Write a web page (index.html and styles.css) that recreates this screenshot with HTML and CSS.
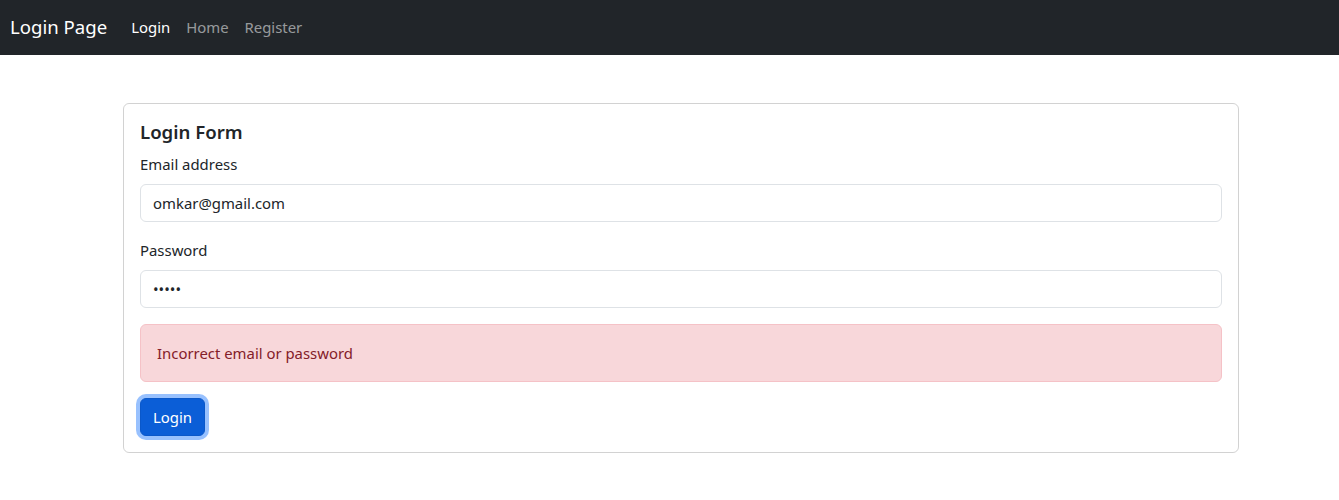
FILE: index.html
```html
<!DOCTYPE html>
<html lang="en">
<head>
<meta charset="utf-8">
<title>Login Page</title>
<link rel="stylesheet" href="styles.css">
</head>
<body>
<nav class="navbar">
  <a class="brand" href="#">Login Page</a>
  <ul class="nav">
    <li><a class="nav-link active" href="#">Login</a></li>
    <li><a class="nav-link" href="#">Home</a></li>
    <li><a class="nav-link" href="#">Register</a></li>
  </ul>
</nav>
<main class="container">
  <div class="card">
    <h5 class="card-title">Login Form</h5>
    <form class="form">
      <div class="field">
        <label class="label" for="email">Email address</label>
        <input class="input" id="email" type="email" value="omkar@gmail.com">
      </div>
      <div class="field">
        <label class="label" for="password">Password</label>
        <input class="input" id="password" type="password" value="12345">
      </div>
      <div class="alert">Incorrect email or password</div>
      <div><button class="btn" type="button">Login</button></div>
    </form>
  </div>
</main>
</body>
</html>
```
FILE: styles.css
```css
* { box-sizing: border-box; }
html, body { margin: 0; padding: 0; }
body {
  font-family: "Noto Sans", "Open Sans", sans-serif;
  font-size: 14.9px;
  line-height: 24px;
  color: #212529;
  background: #fff;
}
.navbar {
  background: #212529;
  height: 55px;
  display: flex;
  align-items: center;
  padding: 0 12px 2px 10px;
}
.brand {
  color: #fff;
  text-decoration: none;
  font-size: 18.6px;
  line-height: 30px;
  margin-right: 16px;
}
.nav {
  list-style: none;
  display: flex;
  margin: 0;
  padding: 0;
}
.nav-link {
  display: block;
  padding: 8px;
  color: rgba(255,255,255,.55);
  text-decoration: none;
}
.nav-link.active { color: #fff; }
.container {
  width: 1116px;
  margin: 48px 0 0 calc(50% - 546.5px);
}
.card {
  border: 1px solid rgba(0,0,0,.175);
  border-radius: 6px;
  padding: 16px;
}
.card-title {
  margin: 0 0 8px;
  font-size: 18.6px;
  font-weight: 600;
  line-height: 24px;
}
.form {
  display: flex;
  flex-direction: column;
  gap: 16px;
}
.field { display: flex; flex-direction: column; }
.label { margin-bottom: 8px; }
.input {
  display: block;
  width: 100%;
  height: 38px;
  padding: 6px 12px;
  font: inherit;
  color: #212529;
  border: 1px solid #dee2e6;
  border-radius: 6px;
  background: #fff;
  outline: none;
}
.alert {
  padding: 16px;
  background: #f8d7da;
  border: 1px solid #f5c2c7;
  border-radius: 6px;
  color: #842029;
}
.btn {
  font: inherit;
  color: #fff;
  background: #0b5ed7;
  border: 1px solid #0a58ca;
  border-radius: 6px;
  padding: 6px 12px;
  line-height: 24px;
  box-shadow: 0 0 0 4px rgba(49,132,253,.5);
  cursor: pointer;
}
```
